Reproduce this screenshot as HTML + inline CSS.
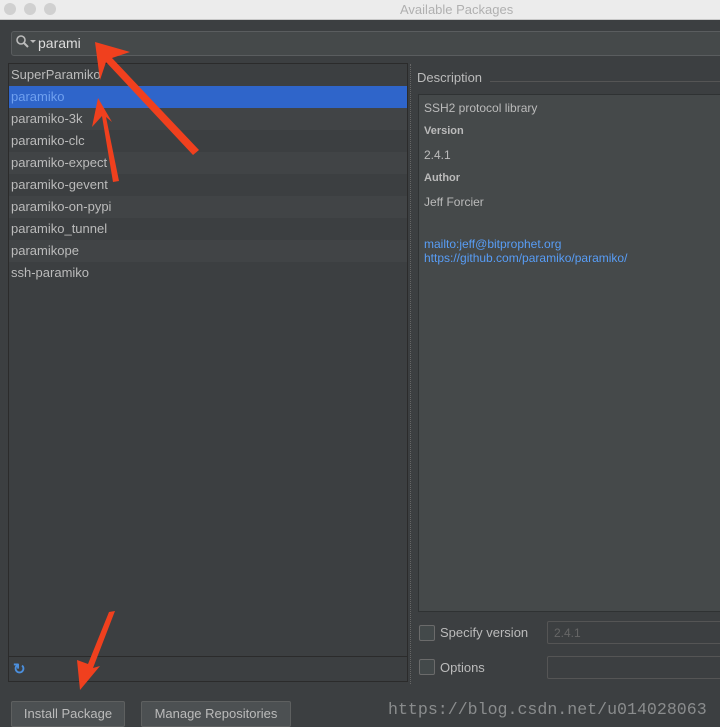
<!DOCTYPE html>
<html><head><style>
body{margin:0;width:720px;height:727px;background:#3c3f41;font-family:"Liberation Sans",sans-serif;font-size:13px;color:#bbbbbb;position:relative;overflow:hidden}
.a{position:absolute}
.row{position:absolute;left:9px;width:398px;height:22px;line-height:22px;padding-left:2px;box-sizing:border-box}
.cb{position:absolute;width:14px;height:14px;border:1px solid #6b6b6b;background:#43494a;border-radius:2px}
.btn{position:absolute;height:24px;line-height:24px;border:1px solid #5e6060;background:#4c5052;color:#bbb;text-align:center;border-radius:2px}
</style></head><body>
<div class="a" style="left:0;top:0;width:720px;height:19px;background:#ececec;border-bottom:1px solid #c8c8c8"></div>
<div class="a" style="left:4px;top:3px;width:12px;height:12px;border-radius:6px;background:#d0d0d0"></div>
<div class="a" style="left:24px;top:3px;width:12px;height:12px;border-radius:6px;background:#d0d0d0"></div>
<div class="a" style="left:44px;top:3px;width:12px;height:12px;border-radius:6px;background:#d0d0d0"></div>
<div class="a" style="left:400px;top:2px;color:#b0b0b0;font-size:13px">Available Packages</div>
<div class="a" style="left:11px;top:31px;width:720px;height:23px;border:1px solid #5a5d5f;background:#45494a;border-radius:3px"></div>
<svg class="a" style="left:16px;top:35px" width="22" height="14"><circle cx="5" cy="5" r="4" stroke="#bbb" stroke-width="1.6" fill="none"/><line x1="8" y1="8" x2="12" y2="12" stroke="#bbb" stroke-width="2"/><polygon points="14,5 20,5 17,8" fill="#bbb"/></svg>
<div class="a" style="left:38px;top:35px;color:#ddd;font-size:14px">parami</div>
<div class="a" style="left:8px;top:63px;width:400px;height:619px;border:1px solid #2b2b2b;box-sizing:border-box;background:#3c3f41"></div>
<div class="row" style="top:64px">SuperParamiko</div>
<div class="row" style="top:86px;background:#2f65ca;color:#6fa0ef">paramiko</div>
<div class="row" style="top:108px;background:#414446">paramiko-3k</div>
<div class="row" style="top:130px">paramiko-clc</div>
<div class="row" style="top:152px;background:#414446">paramiko-expect</div>
<div class="row" style="top:174px">paramiko-gevent</div>
<div class="row" style="top:196px;background:#414446">paramiko-on-pypi</div>
<div class="row" style="top:218px">paramiko_tunnel</div>
<div class="row" style="top:240px;background:#414446">paramikope</div>
<div class="row" style="top:262px">ssh-paramiko</div>
<div class="a" style="left:9px;top:656px;width:398px;height:1px;background:#2b2b2b"></div>
<div class="a" style="left:13px;top:660px;color:#4b8fdd;font-size:15px;font-weight:bold">&#x21BB;</div>
<div class="a" style="left:410px;top:64px;width:1px;height:620px;border-left:1px dotted #666"></div>
<div class="a" style="left:417px;top:70px">Description</div>
<div class="a" style="left:490px;top:81px;width:230px;height:1px;background:#555"></div>
<div class="a" style="left:418px;top:94px;width:310px;height:518px;border:1px solid #2f3233;background:#45494a;box-sizing:border-box"></div>
<div class="a" style="left:424px;top:101px;font-size:12px">SSH2 protocol library</div>
<div class="a" style="left:424px;top:125px;font-size:11px;font-weight:bold">Version</div>
<div class="a" style="left:424px;top:148px;font-size:12px">2.4.1</div>
<div class="a" style="left:424px;top:172px;font-size:11px;font-weight:bold">Author</div>
<div class="a" style="left:424px;top:195px;font-size:12px">Jeff Forcier</div>
<div class="a" style="left:424px;top:237px;font-size:12px;color:#589df6;line-height:14px">mailto:jeff@bitprophet.org<br>https://github.com/paramiko/paramiko/</div>
<div class="cb" style="left:419px;top:625px"></div>
<div class="a" style="left:440px;top:625px">Specify version</div>
<div class="a" style="left:547px;top:621px;width:180px;height:23px;border:1px solid #555;background:#3c3f41;border-radius:2px;box-sizing:border-box;color:#666;padding:4px 6px;font-size:12px">2.4.1</div>
<div class="cb" style="left:419px;top:659px"></div>
<div class="a" style="left:440px;top:660px">Options</div>
<div class="a" style="left:547px;top:656px;width:180px;height:23px;border:1px solid #555;background:#3c3f41;border-radius:2px;box-sizing:border-box"></div>
<div class="btn" style="left:11px;top:701px;width:112px">Install Package</div>
<div class="btn" style="left:141px;top:701px;width:148px">Manage Repositories</div>
<div class="a" style="left:388px;top:700px;font-family:'Liberation Mono',monospace;font-size:16.6px;color:#8a8c8d">https://blog.csdn.net/u014028063</div>
<svg class="a" style="left:0;top:0" width="720" height="727">
<g fill="#f0401e">
<polygon points="199,150 193,155 106,62 100,80 95,42 130,52 112,58"/>
<polygon points="119,181 113,182 102,116 92,127 98,98 112,122 106,117"/>
<polygon points="115,611 109,612 88,664 77,660 80,690 100,666 93,668"/>
</g></svg>
</body></html>
